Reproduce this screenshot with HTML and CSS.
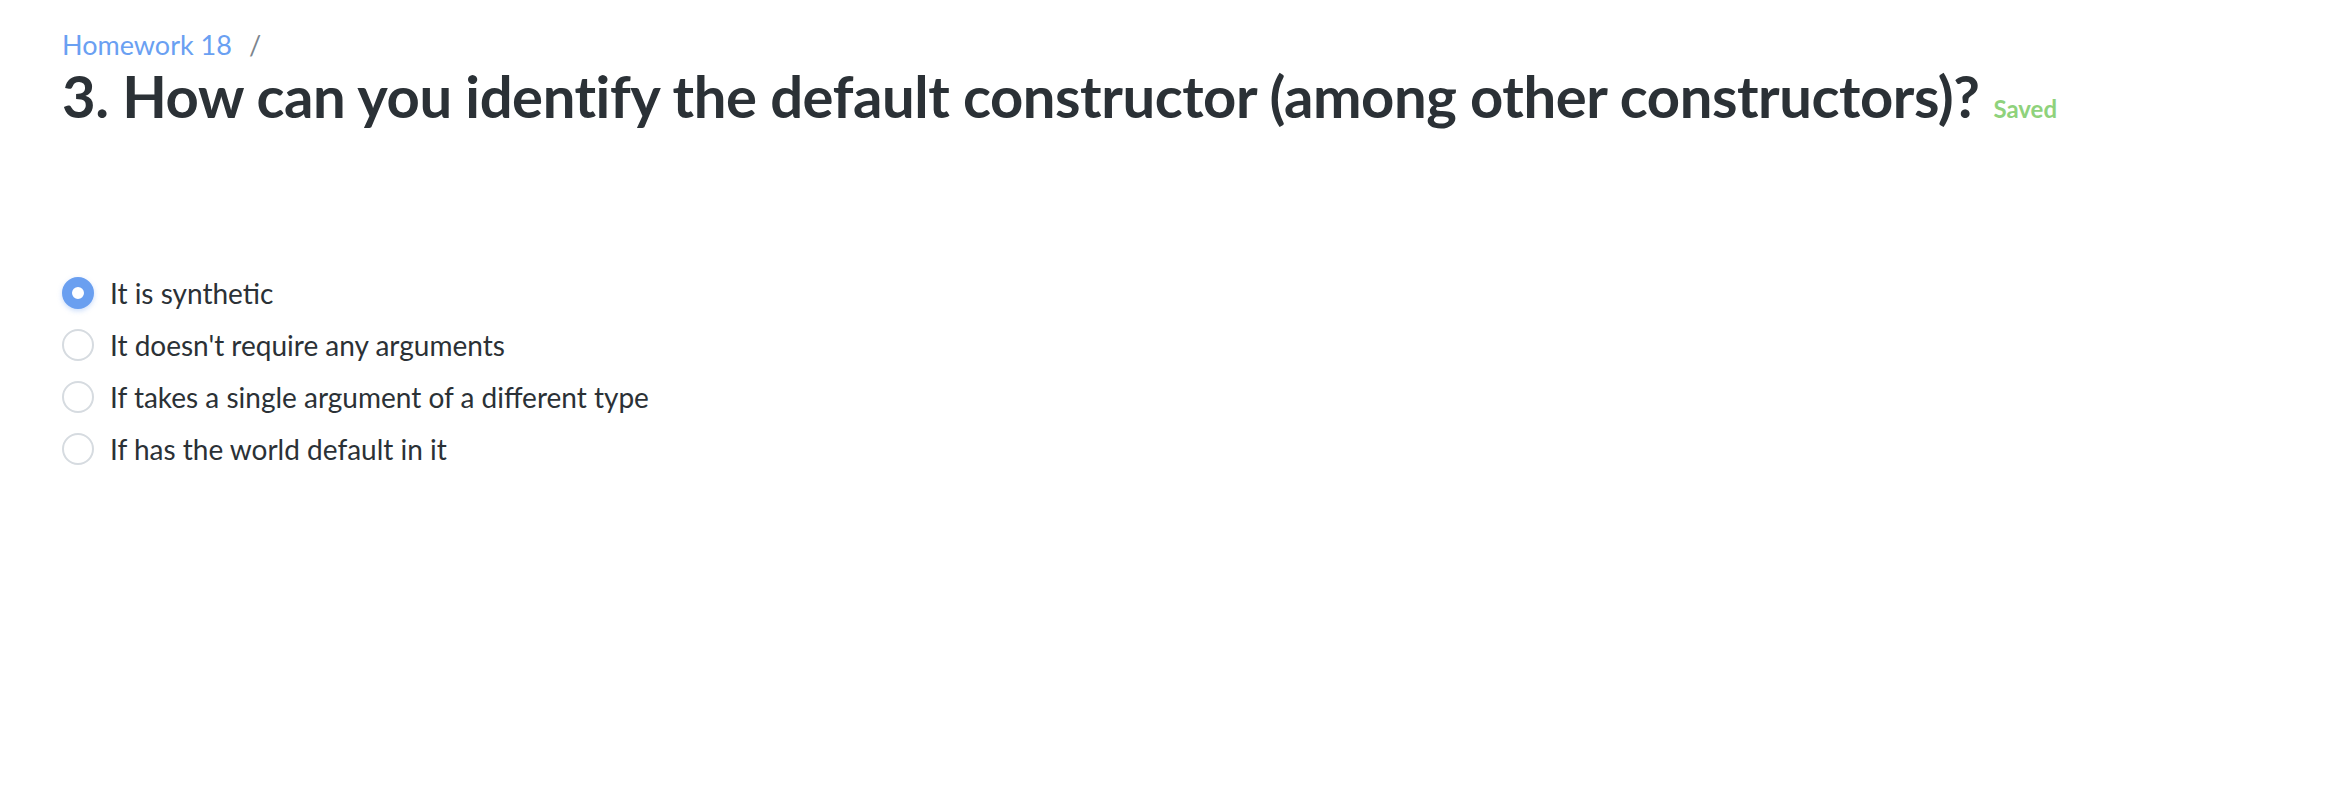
FILE: index.html
```html
<!DOCTYPE html>
<html lang="en">
<head>
<meta charset="utf-8">
<title>Homework 18 - Question 3</title>
<link rel="stylesheet" href="styles.css">
</head>
<body>
<main class="page">
  <nav class="crumbs">
    <a class="crumb-link" href="#">Homework 18</a>
    <span class="crumb-sep">/</span>
  </nav>
  <div class="title-row">
    <h1 class="title">3. How can you identify the default constructor (among other constructors)?</h1>
    <span class="saved">Saved</span>
  </div>
  <ul class="options">
    <li class="option">
      <span class="radio radio-on"></span>
      <span class="option-text">It is synthetic</span>
    </li>
    <li class="option">
      <span class="radio"></span>
      <span class="option-text">It doesn't require any arguments</span>
    </li>
    <li class="option">
      <span class="radio"></span>
      <span class="option-text">If takes a single argument of a different type</span>
    </li>
    <li class="option">
      <span class="radio"></span>
      <span class="option-text">If has the world default in it</span>
    </li>
  </ul>
</main>
</body>
</html>
```
FILE: styles.css
```css
html, body {
  margin: 0;
  padding: 0;
  background: #ffffff;
}

body {
  font-family: "Lato", "Liberation Sans", sans-serif;
  color: #2b3136;
}

.page {
  padding: 30px 62px 0 62px;
}

.crumbs {
  display: flex;
  align-items: baseline;
  gap: 17px;
  font-size: 27px;
  line-height: 30px;
}

.crumb-link {
  color: #6aa0f2;
  text-decoration: none;
}

.crumb-sep {
  color: #7c858d;
}

.title-row {
  display: flex;
  align-items: baseline;
  gap: 14px;
  margin-top: 7px;
}

.title {
  margin: 0;
  font-size: 58px;
  line-height: 58px;
  font-weight: 700;
  letter-spacing: -0.45px;
  color: #2b3136;
}

.saved {
  font-size: 24px;
  line-height: 30px;
  font-weight: 700;
  color: #8fd27c;
}

.options {
  list-style: none;
  margin: 150px 0 0 0;
  padding: 0;
  display: flex;
  flex-direction: column;
  gap: 16px;
}

.option {
  display: flex;
  align-items: center;
  gap: 16px;
  height: 36px;
  font-size: 28px;
}

.radio {
  box-sizing: border-box;
  width: 32px;
  height: 32px;
  border-radius: 50%;
  border: 2px solid #d6dbe0;
  background: #ffffff;
  flex: none;
}

.radio-on {
  border: 10.5px solid #6a9ff0;
  background: #ffffff;
  box-shadow: 0 2px 5px rgba(106, 159, 240, 0.35);
}

.option-text {
  color: #2b3136;
}
```
